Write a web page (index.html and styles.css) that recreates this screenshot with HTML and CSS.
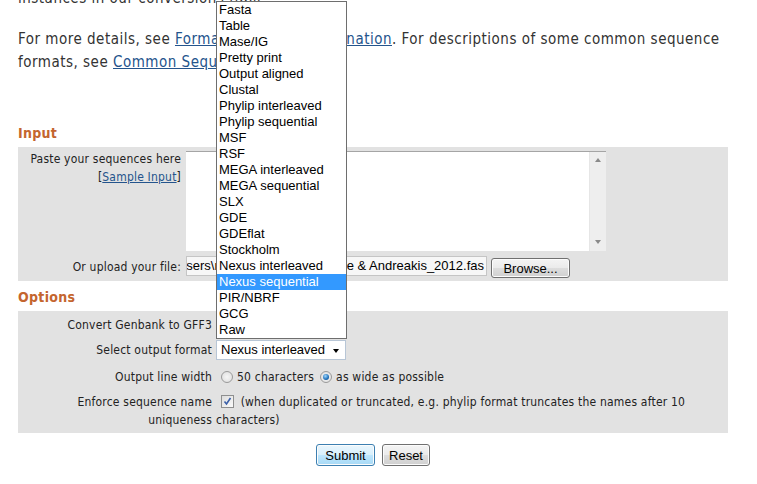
FILE: index.html
```html
<!DOCTYPE html>
<html>
<head>
<meta charset="utf-8">
<link rel="stylesheet" href="styles.css">
</head>
<body>
<div class="page">
  <p class="cut">instances in our conversions table.</p>
  <p class="intro">For more details, see <a href="#">Format Converter Explanation</a>. For descriptions of some common sequence formats, see <a href="#">Common Sequence Formats</a>.</p>

  <h3 class="section-title">Input</h3>
  <div class="box input-box">
    <div class="label label-top">Paste your sequences here<br>[<a href="#">Sample Input</a>]</div>
    <div class="field">
      <div class="textarea">
        <div class="ta-body"></div>
        <div class="scrollbar">
          <span class="arrow-up"></span>
          <span class="arrow-down"></span>
        </div>
      </div>
    </div>
    <div class="label label-mid">Or upload your file:</div>
    <div class="field file-row">
      <div class="file-text"><span>C:\Users\rgmo\Documents\Moore &amp; Andreakis_2012.fas</span></div>
      <button class="btn browse" type="button">Browse...</button>
    </div>
  </div>

  <h3 class="section-title">Options</h3>
  <div class="box options-box">
    <div class="label opt-label">Convert Genbank to GFF3</div>
    <div class="field opt-field">
      <span class="check"></span>
    </div>

    <div class="label opt-label row-up">Select output format</div>
    <div class="field opt-field row-up">
      <div class="select"><span>Nexus interleaved</span><span class="sel-arrow"></span></div>
    </div>

    <div class="label opt-label">Output line width</div>
    <div class="field opt-field">
      <span class="radio"></span><span class="opt-text">50 characters</span>
      <span class="radio on"></span><span class="opt-text">as wide as possible</span>
    </div>

    <div class="label opt-label tall">Enforce sequence name uniqueness</div>
    <div class="field tall-text"><span class="check on"><svg width="13" height="13" viewBox="0 0 13 13"><path d="M3.5 6.5 L5.5 9 L9.5 3" fill="none" stroke="#3a5fa8" stroke-width="1.6"/></svg></span> (when duplicated or truncated, e.g. phylip format truncates the names after 10 characters)</div>
  </div>

  <div class="buttons">
    <button class="btn submit" type="button">Submit</button>
    <button class="btn reset" type="button">Reset</button>
  </div>
</div>

<ul class="dropdown">
  <li>Fasta</li>
  <li>Table</li>
  <li>Mase/IG</li>
  <li>Pretty print</li>
  <li>Output aligned</li>
  <li>Clustal</li>
  <li>Phylip interleaved</li>
  <li>Phylip sequential</li>
  <li>MSF</li>
  <li>RSF</li>
  <li>MEGA interleaved</li>
  <li>MEGA sequential</li>
  <li>SLX</li>
  <li>GDE</li>
  <li>GDEflat</li>
  <li>Stockholm</li>
  <li>Nexus interleaved</li>
  <li class="hl">Nexus sequential</li>
  <li>PIR/NBRF</li>
  <li>GCG</li>
  <li>Raw</li>
</ul>
</body>
</html>
```

FILE: styles.css
```css
* { box-sizing: border-box; }

body {
  margin: 0;
  background: #fff;
  color: #333;
  font-family: "DejaVu Sans Condensed", "DejaVu Sans", sans-serif;
  overflow: hidden;
  position: relative;
}

.page {
  display: flow-root;
  width: 728px;
  padding-left: 18px;
}

a { color: #24548c; text-decoration: underline; }

.cut {
  margin: -13px 0 0;
  font-size: 15px;
  line-height: 23px;
  letter-spacing: 0.5px;
}

.intro {
  margin: 18px 0 0;
  font-size: 15px;
  line-height: 23px;
  letter-spacing: 0.5px;
}

.section-title {
  margin: 0;
  color: #c4652e;
  font-size: 14px;
  font-weight: bold;
  line-height: 20px;
  letter-spacing: 0.3px;
}

.intro + .section-title { margin-top: 49px; }
.box + .section-title { margin-top: 6px; }

.box {
  background: #e2e2e2;
  font-size: 12px;
  letter-spacing: 0.2px;
  color: #222;
  display: grid;
  margin-top: 4px;
  padding: 4px 0;
}

.input-box {
  grid-template-columns: 163px 1fr;
  column-gap: 5px;
  row-gap: 5px;
  padding-bottom: 3px;
}

.options-box {
  grid-template-columns: 194px 1fr;
  column-gap: 4px;
  row-gap: 6px;
}

.label { text-align: right; line-height: 18px; }
.label-top { margin-top: -1px; }
.label-mid { align-self: center; }

.field { display: flex; align-items: center; }

.textarea {
  display: flex;
  width: 420px;
  height: 100px;
  background: #fff;
  border-top: 1px solid #a5a5a5;
}

.ta-body { flex: 1; }

.scrollbar {
  position: relative;
  width: 17px;
  background: #eeeeee;
  border-left: 1px solid #e6e6e6;
}

.arrow-up, .arrow-down {
  position: absolute;
  left: 5px;
  width: 0;
  height: 0;
  border-left: 3.5px solid transparent;
  border-right: 3.5px solid transparent;
}
.arrow-up { top: 6px; border-bottom: 4px solid #8a8a8a; }
.arrow-down { bottom: 7px; border-top: 4px solid #8a8a8a; }

.file-row { gap: 4px; align-items: flex-start; }

.file-text {
  display: flex;
  justify-content: flex-end;
  width: 301px;
  height: 20px;
  overflow: hidden;
  background: #f7f7f7;
  border: 1px solid #c5c5c5;
  font-family: "Liberation Sans", Arial, sans-serif;
  font-size: 13px;
  letter-spacing: 0;
  line-height: 18px;
  color: #000;
  white-space: nowrap;
  padding-right: 2px;
}

.btn {
  font-family: "Liberation Sans", Arial, sans-serif;
  font-size: 13px;
  letter-spacing: 0;
  color: #000;
  height: 21px;
  padding: 0;
  border: 1px solid #707070;
  border-radius: 3px;
  background: linear-gradient(#f4f4f4 0%, #ebebeb 48%, #dddddd 52%, #d0d0d0 100%);
  box-shadow: inset 0 0 0 1px #fcfcfc;
}

.browse { width: 79px; height: 20px; margin-top: 2px; }

.opt-label { line-height: 20px; }
.opt-field { height: 20px; }
.tall { line-height: 18px; }

.row-up { margin-top: -1px; margin-bottom: 1px; }

.select {
  position: relative;
  width: 130px;
  height: 20px;
  background: #fff;
  border: 1px solid #b8c6d6;
  font-family: "Liberation Sans", Arial, sans-serif;
  font-size: 13px;
  letter-spacing: 0;
  line-height: 18px;
  color: #000;
  padding-left: 4px;
}

.sel-arrow {
  position: absolute;
  right: 6px;
  top: 8px;
  width: 0;
  height: 0;
  border-left: 3.5px solid transparent;
  border-right: 3.5px solid transparent;
  border-top: 4px solid #000;
}

.radio {
  display: inline-block;
  width: 12px;
  height: 12px;
  margin: 0 4px 0 5px;
  border-radius: 50%;
  border: 1px solid #9a9a9a;
  background: radial-gradient(circle at 50% 50%, #f6f6f6 0%, #dcdcdc 100%);
  position: relative;
}
.radio.on::after {
  content: "";
  position: absolute;
  left: 2px;
  top: 2px;
  width: 6px;
  height: 6px;
  border-radius: 50%;
  background: radial-gradient(circle at 40% 35%, #9fd8ff 0%, #1f6fb8 60%, #0d4a86 100%);
}

.opt-text { margin-right: 1px; }

.check {
  display: inline-block;
  width: 13px;
  height: 13px;
  margin-left: 5px;
  border: 1px solid #8e8f8f;
  background: linear-gradient(135deg, #dcdcdc, #fbfbfb);
  vertical-align: -2px;
  position: relative;
}
.check svg { position: absolute; left: -1px; top: -1px; }

.tall-text {
  display: block;
  line-height: 18px;
  padding-right: 30px;
}
.tall-text .check { margin-right: 3px; }

.buttons {
  display: flex;
  justify-content: center;
  gap: 7px;
  margin-top: 11px;
}

.submit {
  width: 59px;
  height: 22px;
  border-color: #3c7fb1;
  background: linear-gradient(#eaf6fd 0%, #d9f0fc 48%, #bee6fd 52%, #a7d9f5 100%);
}
.reset { width: 48px; height: 22px; }

.dropdown {
  position: absolute;
  left: 216px;
  top: 1px;
  width: 131px;
  margin: 0;
  padding: 0;
  list-style: none;
  background: #fff;
  border: 1px solid #6e6e6e;
  font-family: "Liberation Sans", Arial, sans-serif;
  font-size: 13px;
  color: #000;
}

.dropdown li {
  height: 16px;
  line-height: 16px;
  padding-left: 2px;
  white-space: nowrap;
}

.dropdown li.hl {
  background: #3399ff;
  color: #fff;
}
```
